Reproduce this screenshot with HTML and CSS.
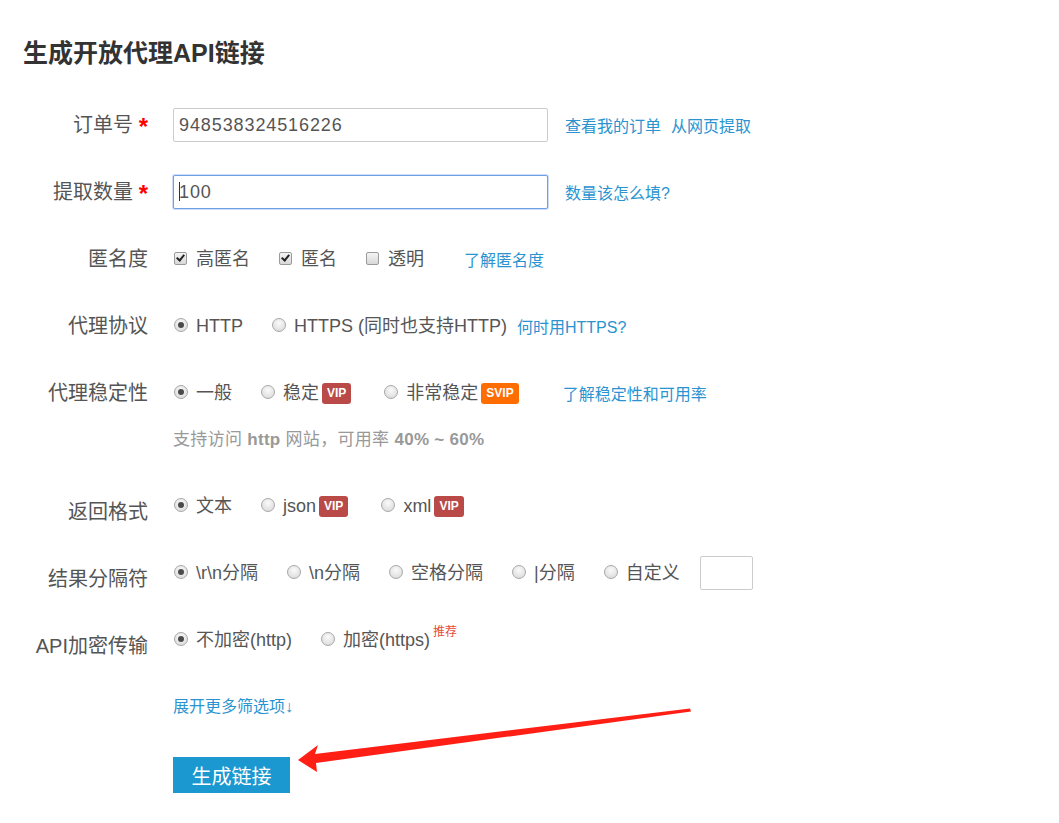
FILE: index.html
```html
<!DOCTYPE html>
<html lang="zh-CN">
<head>
<meta charset="utf-8">
<title>生成开放代理API链接</title>
<link rel="stylesheet" href="styles.css">
</head>
<body>
<div class="page">
  <h1 class="title">生成开放代理API链接</h1>

  <div class="form">
    <div class="row">
      <div class="lbl">订单号<span class="req">*</span></div>
      <div class="ctrl">
        <input class="txt" type="text" value="948538324516226">
        <a class="link first">查看我的订单</a>
        <a class="link next">从网页提取</a>
      </div>
    </div>

    <div class="row">
      <div class="lbl">提取数量<span class="req">*</span></div>
      <div class="ctrl">
        <div class="field-wrap">
          <input class="txt focus" type="text" value="100">
          <span class="caret"></span>
        </div>
        <a class="link first">数量该怎么填?</a>
      </div>
    </div>

    <div class="row">
      <div class="lbl">匿名度</div>
      <div class="ctrl">
        <span class="opt"><span class="cb on"></span>高匿名</span>
        <span class="opt"><span class="cb on"></span>匿名</span>
        <span class="opt last"><span class="cb"></span>透明</span>
        <a class="link anon">了解匿名度</a>
      </div>
    </div>

    <div class="row">
      <div class="lbl">代理协议</div>
      <div class="ctrl">
        <span class="opt"><span class="rd on"></span>HTTP</span>
        <span class="opt last"><span class="rd"></span>HTTPS (同时也支持HTTP)</span>
        <a class="link proto">何时用HTTPS?</a>
      </div>
    </div>

    <div class="row">
      <div class="lbl">代理稳定性</div>
      <div class="ctrl col">
        <div class="line">
          <span class="opt"><span class="rd on"></span>一般</span>
          <span class="opt wide"><span class="rd"></span>稳定<span class="badge vip">VIP</span></span>
          <span class="opt last"><span class="rd"></span>非常稳定<span class="badge svip">SVIP</span></span>
          <a class="link stab">了解稳定性和可用率</a>
        </div>
        <div class="help">支持访问 <b>http</b> 网站，可用率 <b>40% ~ 60%</b></div>
      </div>
    </div>

    <div class="row">
      <div class="lbl low">返回格式</div>
      <div class="ctrl">
        <span class="opt"><span class="rd on"></span>文本</span>
        <span class="opt wide"><span class="rd"></span>json<span class="badge vip">VIP</span></span>
        <span class="opt last"><span class="rd"></span>xml<span class="badge vip">VIP</span></span>
      </div>
    </div>

    <div class="row">
      <div class="lbl low">结果分隔符</div>
      <div class="ctrl">
        <span class="opt"><span class="rd on"></span>\r\n分隔</span>
        <span class="opt"><span class="rd"></span>\n分隔</span>
        <span class="opt"><span class="rd"></span>空格分隔</span>
        <span class="opt"><span class="rd"></span>|分隔</span>
        <span class="opt custom"><span class="rd"></span>自定义</span>
        <input class="txt small" type="text" value="">
      </div>
    </div>

    <div class="row">
      <div class="lbl low">API加密传输</div>
      <div class="ctrl">
        <span class="opt"><span class="rd on"></span>不加密(http)</span>
        <span class="opt last"><span class="rd"></span>加密(https)<span class="rec">推荐</span></span>
      </div>
    </div>

    <div class="row plain">
      <a class="link more">展开更多筛选项↓</a>
    </div>

    <div class="row plain">
      <button class="btn" type="button">生成链接</button>
    </div>
  </div>

  <svg class="arrow" width="1059" height="823" viewBox="0 0 1059 823" aria-hidden="true">
    <polygon points="298,760 318,745 315,754 690,708.5 691,711.5 316,763 317,772" fill="#ff1f14"/>
  </svg>
</div>
</body>
</html>
```

FILE: styles.css
```css
html, body {
  margin: 0;
  padding: 0;
  background: #fff;
}

body {
  font-family: "Liberation Sans", "Noto Sans CJK SC", sans-serif;
  color: #555;
}

.page {
  position: relative;
  width: 1059px;
  height: 823px;
  padding-left: 23px;
  box-sizing: border-box;
  overflow: hidden;
}

.title {
  margin: 0;
  padding-top: 38px;
  font-size: 25px;
  line-height: 30px;
  font-weight: bold;
  color: #333;
}

.form {
  margin-top: 40px;
}

.row {
  display: flex;
  align-items: flex-start;
  margin-bottom: 33px;
}

.row.plain {
  padding-left: 150px;
}

.lbl {
  width: 125px;
  flex: none;
  margin-right: 25px;
  text-align: right;
  font-size: 20px;
  line-height: 34px;
  color: #555;
  white-space: nowrap;
}

.lbl.low {
  padding-top: 6px;
  margin-bottom: -6px;
}

.req {
  display: inline-block;
  margin-left: 4px;
  width: 11px;
  color: #f00;
  font-weight: bold;
  font-size: 24px;
  line-height: 20px;
  vertical-align: -3px;
}

.ctrl {
  display: flex;
  align-items: center;
  min-height: 34px;
  white-space: nowrap;
}

.ctrl.col {
  flex-direction: column;
  align-items: flex-start;
}

.line {
  display: flex;
  align-items: center;
  height: 34px;
}

.help {
  margin-top: 18px;
  margin-bottom: 4px;
  font-size: 17px;
  line-height: 24px;
  letter-spacing: 0.3px;
  color: #999;
}

.help b {
  color: #999;
}

.txt {
  box-sizing: border-box;
  width: 375px;
  height: 34px;
  padding: 0 5px;
  border: 1px solid #ccc;
  border-radius: 2px;
  font-family: "Liberation Sans", "Noto Sans CJK SC", sans-serif;
  font-size: 18px;
  letter-spacing: 0.9px;
  color: #555;
  background: #fff;
  outline: none;
}

.txt.focus {
  border-color: #6f9fe6;
  box-shadow: 0 0 0 1px rgba(111, 159, 230, 0.35);
}

.txt.small {
  width: 53px;
}

.field-wrap {
  position: relative;
  display: flex;
}

.caret {
  position: absolute;
  left: 6px;
  top: 7px;
  width: 1px;
  height: 19px;
  background: #333;
}

.link {
  font-size: 16px;
  color: #2a93d0;
  text-decoration: none;
  cursor: pointer;
}

.link.first {
  margin-left: 17px;
}

.link.next {
  margin-left: 10px;
}

.link.anon {
  margin-left: 40px;
}

.link.proto {
  margin-left: 10px;
}

.link.stab {
  margin-left: 44px;
}

.link.more {
  line-height: 34px;
}

.opt {
  display: inline-flex;
  align-items: center;
  margin-right: 28px;
  font-size: 18px;
  line-height: 34px;
  color: #555;
}

.opt.wide {
  margin-right: 32px;
}

.opt.last {
  margin-right: 0;
}

.opt.custom {
  margin-right: 20px;
}

.cb {
  position: relative;
  width: 11px;
  height: 11px;
  margin-left: 1px;
  margin-right: 9px;
  border: 1px solid #9a9a9a;
  border-radius: 2px;
  background: linear-gradient(#f4f4f4, #d8d8d8);
  flex: none;
  align-self: center;
  margin-top: -2px;
}

.cb.on::after {
  content: "";
  position: absolute;
  left: 3px;
  top: 0px;
  width: 3px;
  height: 6px;
  border-right: 2px solid #222;
  border-bottom: 2px solid #222;
  transform: rotate(40deg);
}

.rd {
  position: relative;
  width: 12px;
  height: 12px;
  margin-left: 1px;
  margin-right: 8px;
  border: 1px solid #a8a8a8;
  border-radius: 50%;
  background: radial-gradient(circle at 50% 35%, #fafafa, #d6d6d6);
  flex: none;
  margin-top: -3px;
}

.rd.on::after {
  content: "";
  position: absolute;
  left: 3px;
  top: 3px;
  width: 6px;
  height: 6px;
  border-radius: 50%;
  background: #4a4a4a;
}

.badge {
  display: inline-block;
  margin-left: 3px;
  padding: 0 5px;
  height: 21px;
  line-height: 21px;
  border-radius: 3px;
  font-size: 12px;
  font-weight: bold;
  color: #fff;
}

.badge.vip {
  background: #b94a48;
}

.badge.svip {
  background: #ff6c00;
}

.rec {
  position: relative;
  top: -8px;
  margin-left: 3px;
  font-size: 12px;
  line-height: 14px;
  color: #e74c3c;
}

.btn {
  width: 117px;
  height: 36px;
  padding: 0;
  border: none;
  border-radius: 0;
  background: #1b98d0;
  color: #fff;
  font-family: "Liberation Sans", "Noto Sans CJK SC", sans-serif;
  font-size: 20px;
  cursor: pointer;
}

.arrow {
  position: absolute;
  left: 0;
  top: 0;
  pointer-events: none;
}
```
